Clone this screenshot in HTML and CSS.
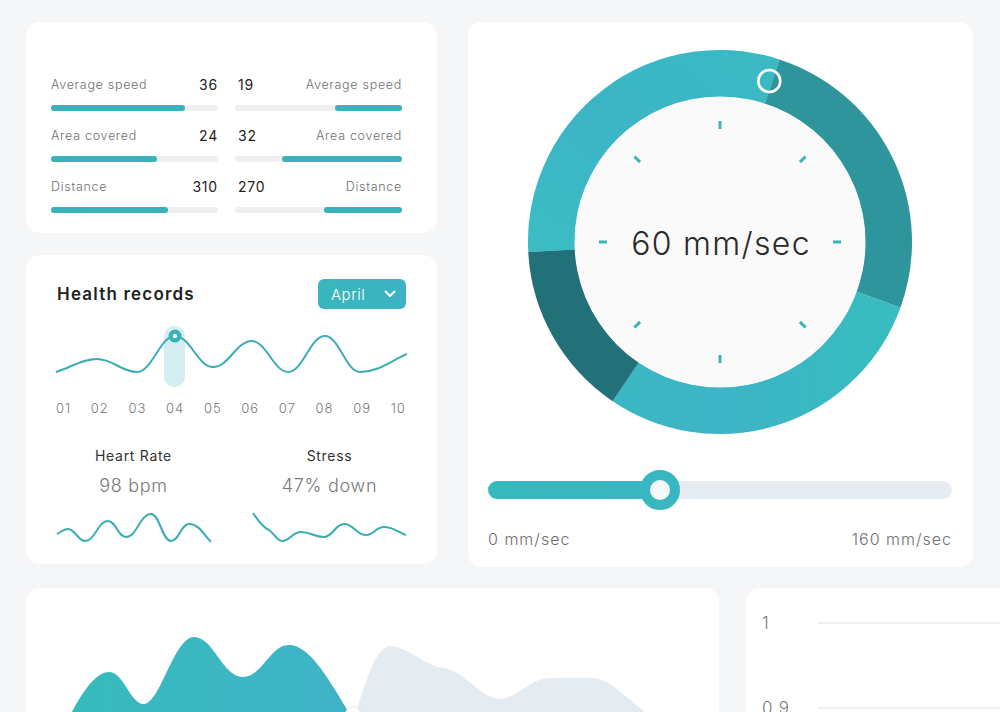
FILE: index.html
```html
<!DOCTYPE html>
<html lang="en">
<head>
<meta charset="utf-8">
<title>Dashboard</title>
<link rel="stylesheet" href="styles.css">
</head>
<body>
<div class="page">
  <div class="row-top">
    <div class="col-left">
      <section class="card card-stats">
        <div class="stats">
          <div class="stat">
            <div class="stat-head"><span class="lbl">Average speed</span><span class="num">36</span></div>
            <div class="bar"><div class="fill" style="width:80%"></div></div>
          </div>
          <div class="stat stat-r">
            <div class="stat-head"><span class="num">19</span><span class="lbl">Average speed</span></div>
            <div class="bar"><div class="fill" style="width:40%"></div></div>
          </div>
          <div class="stat">
            <div class="stat-head"><span class="lbl">Area covered</span><span class="num">24</span></div>
            <div class="bar"><div class="fill" style="width:63.5%"></div></div>
          </div>
          <div class="stat stat-r">
            <div class="stat-head"><span class="num">32</span><span class="lbl">Area covered</span></div>
            <div class="bar"><div class="fill" style="width:72%"></div></div>
          </div>
          <div class="stat">
            <div class="stat-head"><span class="lbl">Distance</span><span class="num">310</span></div>
            <div class="bar"><div class="fill" style="width:70%"></div></div>
          </div>
          <div class="stat stat-r">
            <div class="stat-head"><span class="num">270</span><span class="lbl">Distance</span></div>
            <div class="bar"><div class="fill" style="width:47%"></div></div>
          </div>
        </div>
      </section>

      <section class="card card-health">
        <div class="health-head">
          <h2 class="title">Health records</h2>
          <button class="select">April
            <svg class="chev" width="12" height="8" viewBox="0 0 12 8"><polyline points="1.5,1.5 6,6 10.5,1.5" fill="none" stroke="#fff" stroke-width="2" stroke-linecap="round" stroke-linejoin="round"/></svg>
          </button>
        </div>
        <svg class="health-chart" width="351" height="70" viewBox="0 0 351 70">
          <rect x="108" y="4" width="21" height="61" rx="10" fill="#d5eef2"/>
          <path d="M0,50 C16,45 26,37 41,37 C57,37 65,50 81,50 C96,50 104,14 119,14 C134,14 142,45 157,45 C173,45 180,19 196,19 C210,19 218,50 232,50 C247,50 254,14 269,14 C283,14 290,50 304,50 C322,50 333,40 351,32" fill="none" stroke="#3aacb6" stroke-width="2"/>
          <circle cx="119" cy="14" r="6.5" fill="#3ab2bc"/>
          <circle cx="119" cy="14" r="2.2" fill="#fff"/>
        </svg>
        <div class="xlabels">
          <span>01</span><span>02</span><span>03</span><span>04</span><span>05</span><span>06</span><span>07</span><span>08</span><span>09</span><span>10</span>
        </div>
        <div class="vitals">
          <div class="vital">
            <div class="vital-name">Heart Rate</div>
            <div class="vital-val">98 bpm</div>
            <svg class="spark" width="155" height="34" viewBox="0 0 155 34">
              <path d="M1,23 C5,21 8,18 12,18 C19,18 22,30 29,30 C39,30 42,10 52,10 C60,10 62,26 70,26 C81,26 84,3 95,3 C104,3 106,30 115,30 C123,30 125,13 133,13 C143,13 148,24 155,31" fill="none" stroke="#3aacb6" stroke-width="2"/>
            </svg>
          </div>
          <div class="vital">
            <div class="vital-name">Stress</div>
            <div class="vital-val">47% down</div>
            <svg class="spark" width="155" height="34" viewBox="0 0 155 34">
              <path d="M1,2 C6,9 10,16 17,19 C22,22 25,30 30,30 C38,30 40,21 49,21 C59,21 62,26 72,26 C81,26 83,13 92,13 C102,13 104,24 114,24 C122,24 124,16 132,16 C141,16 146,21 154,24" fill="none" stroke="#3aacb6" stroke-width="2"/>
            </svg>
          </div>
        </div>
      </section>
    </div>

    <section class="card card-gauge">
      <svg class="gauge" width="388" height="388" viewBox="0 0 388 388">
        <defs>
          <linearGradient id="gA" x1="0" y1="1" x2="1" y2="0">
            <stop offset="0" stop-color="#3bbcc3"/>
            <stop offset="0.45" stop-color="#3cb5c6"/>
            <stop offset="1" stop-color="#3ab9c3"/>
          </linearGradient>
          <linearGradient id="gC" x1="1" y1="0" x2="0" y2="0">
            <stop offset="0" stop-color="#37bcbf"/>
            <stop offset="0.6" stop-color="#3db4c7"/>
            <stop offset="1" stop-color="#3bb7c3"/>
          </linearGradient>
        </defs>
        <path d="M25.73,202.82 A168.5,168.5 0 0 1 246.07,33.74" fill="none" stroke="url(#gA)" stroke-width="47"/>
        <path d="M246.07,33.74 A168.5,168.5 0 0 1 352.34,251.63" fill="none" stroke="#2e959d" stroke-width="47"/>
        <path d="M352.34,251.63 A168.5,168.5 0 0 1 99.78,333.69" fill="none" stroke="url(#gC)" stroke-width="47"/>
        <path d="M99.78,333.69 A168.5,168.5 0 0 1 25.73,202.82" fill="none" stroke="#227078" stroke-width="47"/>
        <circle cx="194" cy="194" r="145.5" fill="#fafafa"/>
        <g stroke="#3bb3bf" stroke-width="3">
          <line x1="194" y1="73" x2="194" y2="81"/>
          <line x1="194" y1="73" x2="194" y2="81" transform="rotate(45 194 194)"/>
          <line x1="194" y1="73" x2="194" y2="81" transform="rotate(90 194 194)"/>
          <line x1="194" y1="73" x2="194" y2="81" transform="rotate(135 194 194)"/>
          <line x1="194" y1="73" x2="194" y2="81" transform="rotate(180 194 194)"/>
          <line x1="194" y1="73" x2="194" y2="81" transform="rotate(225 194 194)"/>
          <line x1="194" y1="73" x2="194" y2="81" transform="rotate(270 194 194)"/>
          <line x1="194" y1="73" x2="194" y2="81" transform="rotate(315 194 194)"/>
        </g>
        <circle cx="243.3" cy="33" r="11" fill="none" stroke="#fff" stroke-width="2.6"/>
        <text class="gauge-text" x="195" y="195" text-anchor="middle" dominant-baseline="central">60 mm/sec</text>
      </svg>
      <div class="slider">
        <div class="track"><div class="track-fill" style="width:37%"></div></div>
        <div class="knob" style="left:calc(37% - 20px)"></div>
      </div>
      <div class="range">
        <span>0 mm/sec</span><span>160 mm/sec</span>
      </div>
    </section>
  </div>

  <div class="row-bottom">
    <section class="card card-area">
      <svg class="area" width="693" height="140" viewBox="0 0 693 140">
        <defs>
          <linearGradient id="gT" x1="0" y1="0" x2="1" y2="0">
            <stop offset="0" stop-color="#37bbbc"/>
            <stop offset="1" stop-color="#3fb3c8"/>
          </linearGradient>
        </defs>
        <path d="M325,140 C335,110 348,58 364,58 C380,58 400,78 417,80 C438,82 455,111 474,111 C490,111 505,90 524,90 L567,90 C585,90 610,120 640,140 Z" fill="#e4ebf1"/>
        <path d="M38,140 C52,110 68,84 83,84 C98,84 104,116 118,116 C134,116 148,49 168,49 C188,49 196,89 217,89 C236,89 244,57 263,57 C285,57 305,95 332,140 Z" fill="url(#gT)"/>
        <circle cx="327" cy="126" r="7.5" fill="#fff" stroke="#d9e6ea" stroke-width="1"/>
      </svg>
    </section>
    <section class="card card-lines">
      <div class="gl-row"><span class="gl-lbl">1</span><span class="gl-line"></span></div>
      <div class="gl-row"><span class="gl-lbl">0.9</span><span class="gl-line"></span></div>
    </section>
  </div>
</div>
</body>
</html>
```

FILE: styles.css
```css
* { box-sizing: border-box; }
html, body {
  margin: 0;
  padding: 0;
  width: 1000px;
  height: 712px;
  overflow: hidden;
  background: #f4f6f8;
  font-family: "Inter", "Noto Sans", sans-serif;
  color: #222;
}
.page {
  padding: 22px 0 0 26px;
}
.row-top {
  display: grid;
  grid-template-columns: 411px 505px;
  column-gap: 31px;
}
.col-left {
  display: flex;
  flex-direction: column;
  gap: 22px;
}
.card {
  background: #fff;
  border-radius: 14px;
}

/* stats card */
.card-stats {
  height: 211px;
  padding: 54px 35px 0 25px;
}
.stats {
  display: grid;
  grid-template-columns: 167px 167px;
  column-gap: 17px;
  row-gap: 16px;
}
.stat-head {
  display: flex;
  justify-content: space-between;
  align-items: center;
  height: 16px;
  margin-bottom: 13px;
}
.lbl {
  font-size: 12.5px;
  font-weight: 300;
  color: #6f6f6f;
  letter-spacing: 0.7px;
}
.num {
  font-size: 14px;
  font-weight: 400;
  color: #222;
  letter-spacing: 0.8px;
}
.stat-r .num { padding-left: 3px; }
.bar {
  height: 6px;
  border-radius: 3px;
  background: #efefef;
  display: flex;
}
.stat-r .bar { justify-content: flex-end; }
.fill {
  height: 6px;
  border-radius: 3px;
  background: #3bb1bb;
}

/* health card */
.card-health {
  height: 309px;
  padding: 24px 31px 0 31px;
}
.health-head {
  display: flex;
  justify-content: space-between;
  align-items: center;
  height: 30px;
}
.title {
  margin: 0;
  font-size: 17px;
  font-weight: 600;
  letter-spacing: 1.2px;
  color: #222;
}
.select {
  width: 88px;
  height: 30px;
  border: none;
  border-radius: 6px;
  background: linear-gradient(90deg, #39b7bd, #3db2c3);
  color: #fff;
  font-family: inherit;
  font-size: 15px;
  font-weight: 300;
  letter-spacing: 0.5px;
  display: flex;
  align-items: center;
  justify-content: space-between;
  padding: 0 10px 0 13px;
}
.health-chart {
  display: block;
  margin: 13px 0 0 -1px;
}
.xlabels {
  display: flex;
  justify-content: space-between;
  margin-top: 8px;
  margin-left: -1px;
  line-height: 16px;
  font-size: 13px;
  font-weight: 300;
  color: #777;
  letter-spacing: 1px;
}
.vitals {
  display: grid;
  grid-template-columns: 153px 153px;
  column-gap: 43px;
  margin-top: 31px;
}
.vital {
  display: flex;
  flex-direction: column;
  align-items: center;
}
.vital-name {
  font-size: 14px;
  line-height: 18px;
  font-weight: 400;
  letter-spacing: 0.7px;
  color: #333;
}
.vital-val {
  margin-top: 10px;
  font-size: 18px;
  line-height: 22px;
  font-weight: 300;
  letter-spacing: 0.7px;
  color: #7a7a7a;
}
.spark {
  display: block;
  margin-top: 14px;
}

/* gauge card */
.card-gauge {
  height: 545px;
  padding: 26px 21px 0 20px;
}
.gauge {
  display: block;
  margin: 0 auto;
}
.gauge-text {
  font-family: "Inter", "Noto Sans", sans-serif;
  font-size: 32px;
  font-weight: 300;
  letter-spacing: 1.3px;
  fill: #2a2a2a;
}
.slider {
  position: relative;
  height: 40px;
  margin-top: 34px;
}
.track {
  position: absolute;
  left: 0;
  right: 0;
  top: 11px;
  height: 18px;
  border-radius: 9px;
  background: #e6ecf2;
}
.track-fill {
  height: 18px;
  border-radius: 9px;
  background: linear-gradient(90deg, #36b9bc, #3bb6c3);
}
.knob {
  position: absolute;
  top: 0;
  width: 40px;
  height: 40px;
  border-radius: 50%;
  border: 10px solid #39b7c1;
  background: #f6f8f9;
}
.range {
  display: flex;
  justify-content: space-between;
  margin-top: 19px;
  font-size: 16px;
  line-height: 20px;
  font-weight: 300;
  color: #6f6f6f;
  letter-spacing: 1px;
}

/* bottom row */
.row-bottom {
  display: flex;
  gap: 27px;
  margin-top: 21px;
}
.card-area {
  width: 693px;
  height: 200px;
  flex: none;
}
.area { display: block; }
.card-lines {
  width: 300px;
  height: 200px;
  flex: none;
  padding: 26px 0 0 16px;
  display: flex;
  flex-direction: column;
  gap: 67px;
}
.gl-row {
  display: flex;
  align-items: center;
  height: 18px;
}
.gl-lbl {
  width: 56px;
  font-size: 17px;
  font-weight: 300;
  color: #777;
  letter-spacing: 1px;
}
.gl-line {
  flex: 1;
  height: 2px;
  background: #eef0f3;
}
```
